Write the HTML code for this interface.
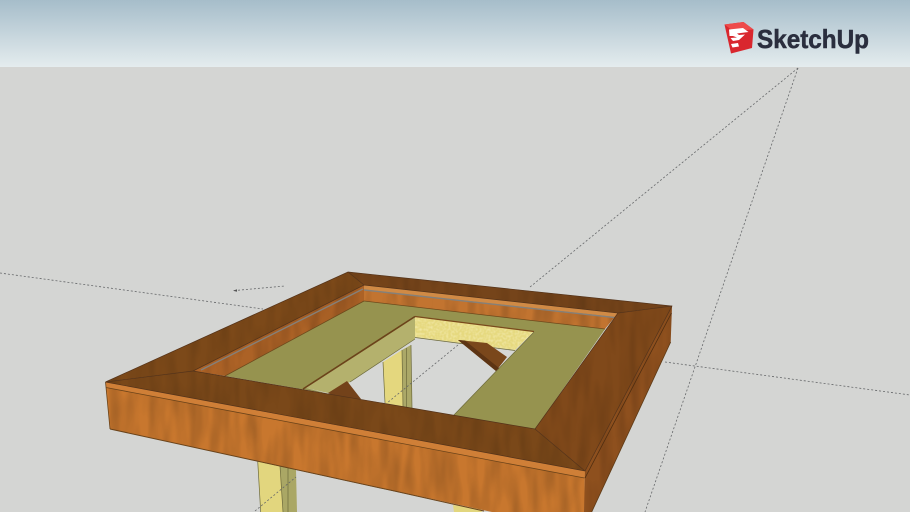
<!DOCTYPE html>
<html><head><meta charset="utf-8"><title>SketchUp</title>
<style>html,body{margin:0;padding:0;width:910px;height:512px;overflow:hidden;background:#d4d5d3}svg{display:block}</style></head>
<body>
<svg width="910" height="512" viewBox="0 0 910 512" xmlns="http://www.w3.org/2000/svg">
<defs>
<linearGradient id="sky" x1="0" y1="0" x2="0" y2="1"><stop offset="0" stop-color="#a6bdca"/><stop offset="1" stop-color="#e4ecee"/></linearGradient>
<filter id="grain" x="0" y="0" width="100%" height="100%"><feTurbulence type="fractalNoise" baseFrequency="0.1 0.018" numOctaves="2" seed="4"/><feGaussianBlur stdDeviation="1"/><feColorMatrix values="0 0 0 0 0  0 0 0 0 0  0 0 0 0 0  1.4 0 0 0 -0.5"/></filter>
<filter id="speck" x="0" y="0" width="100%" height="100%"><feTurbulence type="fractalNoise" baseFrequency="0.45" numOctaves="1" seed="2"/><feColorMatrix values="0 0 0 0 1  0 0 0 0 .95  0 0 0 0 .65  1.6 0 0 0 -0.6"/></filter>
<clipPath id="cf"><polygon points="105.5,382 585,471 584,532 110,429"/></clipPath>
<clipPath id="cr"><polygon points="585,471 672,306 670.7,342 591.7,512 584,512"/></clipPath>
<clipPath id="ct"><path d="M105.5,382 348,272 672,306 585,471Z M193,371 535,429 618,313 364,285Z" clip-rule="evenodd"/></clipPath>
<clipPath id="cb"><polygon points="364,285 618,313 605,329 364,301"/></clipPath>
<clipPath id="cl"><polygon points="193,371 364,285 364,301 225,376"/></clipPath>
<clipPath id="cy"><polygon points="415,317 534,331.5 515,350 415,337"/></clipPath>
</defs>
<rect width="910" height="512" fill="#d4d5d3"/>
<rect width="910" height="67" fill="url(#sky)"/>
<!-- axis lines -->
<g fill="none" stroke="#66686a" stroke-width=".8" stroke-dasharray="2 2">
<path d="M798,68 530,287"/><path d="M798,68 645,512"/>
<path d="M0,273 263,309"/><path d="M665,362 910,395"/>
<path d="M234,290.6 285,286"/>
</g>
<path d="M233,290.7l4,-1.4v2.4z" fill="#555"/>
<!-- posts below -->
<polygon points="257.7,461 280,466 283,512 260.7,512" fill="#e2d67e"/>
<polygon points="280,466 296,470 297,512 283,512" fill="#aaa765"/>
<path d="M288,468V512M280,466 283,512M257.7,461 260.7,512" stroke="#6d6a3c" stroke-width=".7" fill="none"/>
<polygon points="453,505 481,509 482,512 454,512" fill="#e2d67e"/>
<path d="M255,511 296,477" stroke="#66686a" stroke-width=".8" stroke-dasharray="2 2"/>
<!-- floor -->
<polygon points="364,301 605,329 535,429 225,376" fill="#96934f"/>
<!-- hole -->
<polygon points="415,317 534,332 452,417 360,402 306,388" fill="#d6d7d5"/>
<!-- back yellow wall -->
<polygon points="415,317 534,331.5 515,350 415,337" fill="#e6d97f"/>
<g clip-path="url(#cy)"><rect x="412" y="314" width="125" height="40" filter="url(#speck)" opacity=".6"/></g>
<path d="M415,337.5 515,350.5" stroke="#6d6a3c" stroke-width=".8"/>
<path d="M415,316.5 534,331.5" stroke="#7a4a1c" stroke-width="1.2"/>
<!-- post through hole -->
<polygon points="383,362 402,350 403,407 385,403" fill="#e4d77e"/>
<polygon points="402,350 411,345 412,408 403,407" fill="#aba868"/>
<path d="M383,362 385,403M402,350 403,407M406.5,348V407M411,345 412,408" stroke="#6d6a3c" stroke-width=".7" fill="none"/>
<path d="M458,345 387,403" stroke="#66686a" stroke-width=".8" stroke-dasharray="2 2"/>
<!-- joist side -->
<polygon points="415,317 415,339 350,382 328,393 306,388" fill="#b4b16d"/>
<path d="M415,339 350,382" stroke="#6d6a3c" stroke-width=".7"/>
<path d="M415,316.5 303,389" stroke="#6b431a" stroke-width="1.6"/>
<polygon points="328,393 347,381 361,399 345,402" fill="#73421a"/>
<!-- right floor -->
<polygon points="534,332 605,329 535,429 452,417" fill="#96934f"/>
<path d="M534,332 452,417" stroke="#6d6a3c" stroke-width=".7"/>
<polygon points="458,340 487,343 507,357 496,371" fill="#7a471b"/>
<polygon points="458,340 496,371 499,368 465,340.5" fill="#5d3413"/>
<!-- inner walls -->
<polygon points="364,285 618,313 605,329 364,301" fill="#c27430"/>
<g clip-path="url(#cb)"><rect x="360" y="283" width="262" height="50" filter="url(#grain)" opacity=".28"/></g>
<polygon points="364,285 618,313 615,317 364,289.5" fill="#d08a45"/>
<path d="M364,290 615,317.6" stroke="#84807a" stroke-width="1.4"/>
<path d="M364,301 605,329" stroke="#6d4a1c" stroke-width=".8"/>
<polygon points="193,371 364,285 364,301 225,376" fill="#ac6226"/>
<g clip-path="url(#cl)"><rect x="190" y="283" width="176" height="96" filter="url(#grain)" opacity=".25"/></g>
<path d="M201,370 363,289" stroke="#84807a" stroke-width="1.4"/>
<path d="M225,376 364,301" stroke="#6d4a1c" stroke-width=".8"/>
<!-- front face -->
<polygon points="105.5,382 585,471 584,532 110,429" fill="#c8772e"/>
<g clip-path="url(#cf)"><rect x="100" y="380" width="490" height="135" filter="url(#grain)" opacity=".26"/></g>
<polygon points="105.5,382 585,471 584.5,478 106,387.5" fill="#cf7f37"/>
<path d="M106,387.5 584.5,478" stroke="#6b4319" stroke-width=".8"/>
<path d="M110,429 391,490.3 484,511" stroke="#69431a" stroke-width="1"/>
<path d="M105.5,382 110,429" stroke="#69431a" stroke-width=".8"/>
<!-- right face -->
<polygon points="585,471 672,306 670.7,342 591.7,512 584,512" fill="#8e501e"/>
<g clip-path="url(#cr)"><rect x="580" y="304" width="94" height="210" filter="url(#grain)" opacity=".2"/></g>
<path d="M585,478 671.5,313" stroke="#4f2d10" stroke-width=".8"/>
<path d="M670.7,342 591.7,512" stroke="#5d3a16" stroke-width=".8"/>
<!-- top faces -->
<polygon points="105.5,382 193,371 535,429 585,471" fill="#7a4819"/>
<polygon points="105.5,382 348,272 364,285 193,371" fill="#7c4919"/>
<polygon points="348,272 672,306 618,313 364,285" fill="#75441a"/>
<polygon points="672,306 585,471 535,429 618,313" fill="#80491a"/>
<g clip-path="url(#ct)"><rect x="100" y="268" width="576" height="206" filter="url(#grain)" opacity=".18"/></g>
<path d="M105.5,382 193,371 M348,272 364,285 M672,306 618,313 M585,471 535,429 M193,371 535,429 618,313 364,285 193,371 M105.5,382 348,272 672,306 585,471 105.5,382" stroke="#54331a" stroke-width=".7" fill="none"/>
<!-- logo -->
<polygon points="724.5,24.5 743.5,22 753.5,29.5 752,48 731,53.5" fill="#d9272e"/>
<polygon points="724.5,24.5 743.5,22 753.5,29.5 733,31" fill="#ee4b4b"/>
<path d="M729,29.5 743,28 748.5,32 737,33.5 739,35 745,34.5 739,40 733,41 730.5,38 737,37.5 733,36 729.5,36Z" fill="#fff"/>
<polygon points="731,44 738,43 739,46.5 732.5,47.5" fill="#fff"/>
<text x="757" y="48" font-family="'Liberation Sans',sans-serif" font-weight="700" font-size="26" fill="#2a2e3e" stroke="#2a2e3e" stroke-width=".5" textLength="112" lengthAdjust="spacingAndGlyphs">SketchUp</text>
</svg>
</body></html>
